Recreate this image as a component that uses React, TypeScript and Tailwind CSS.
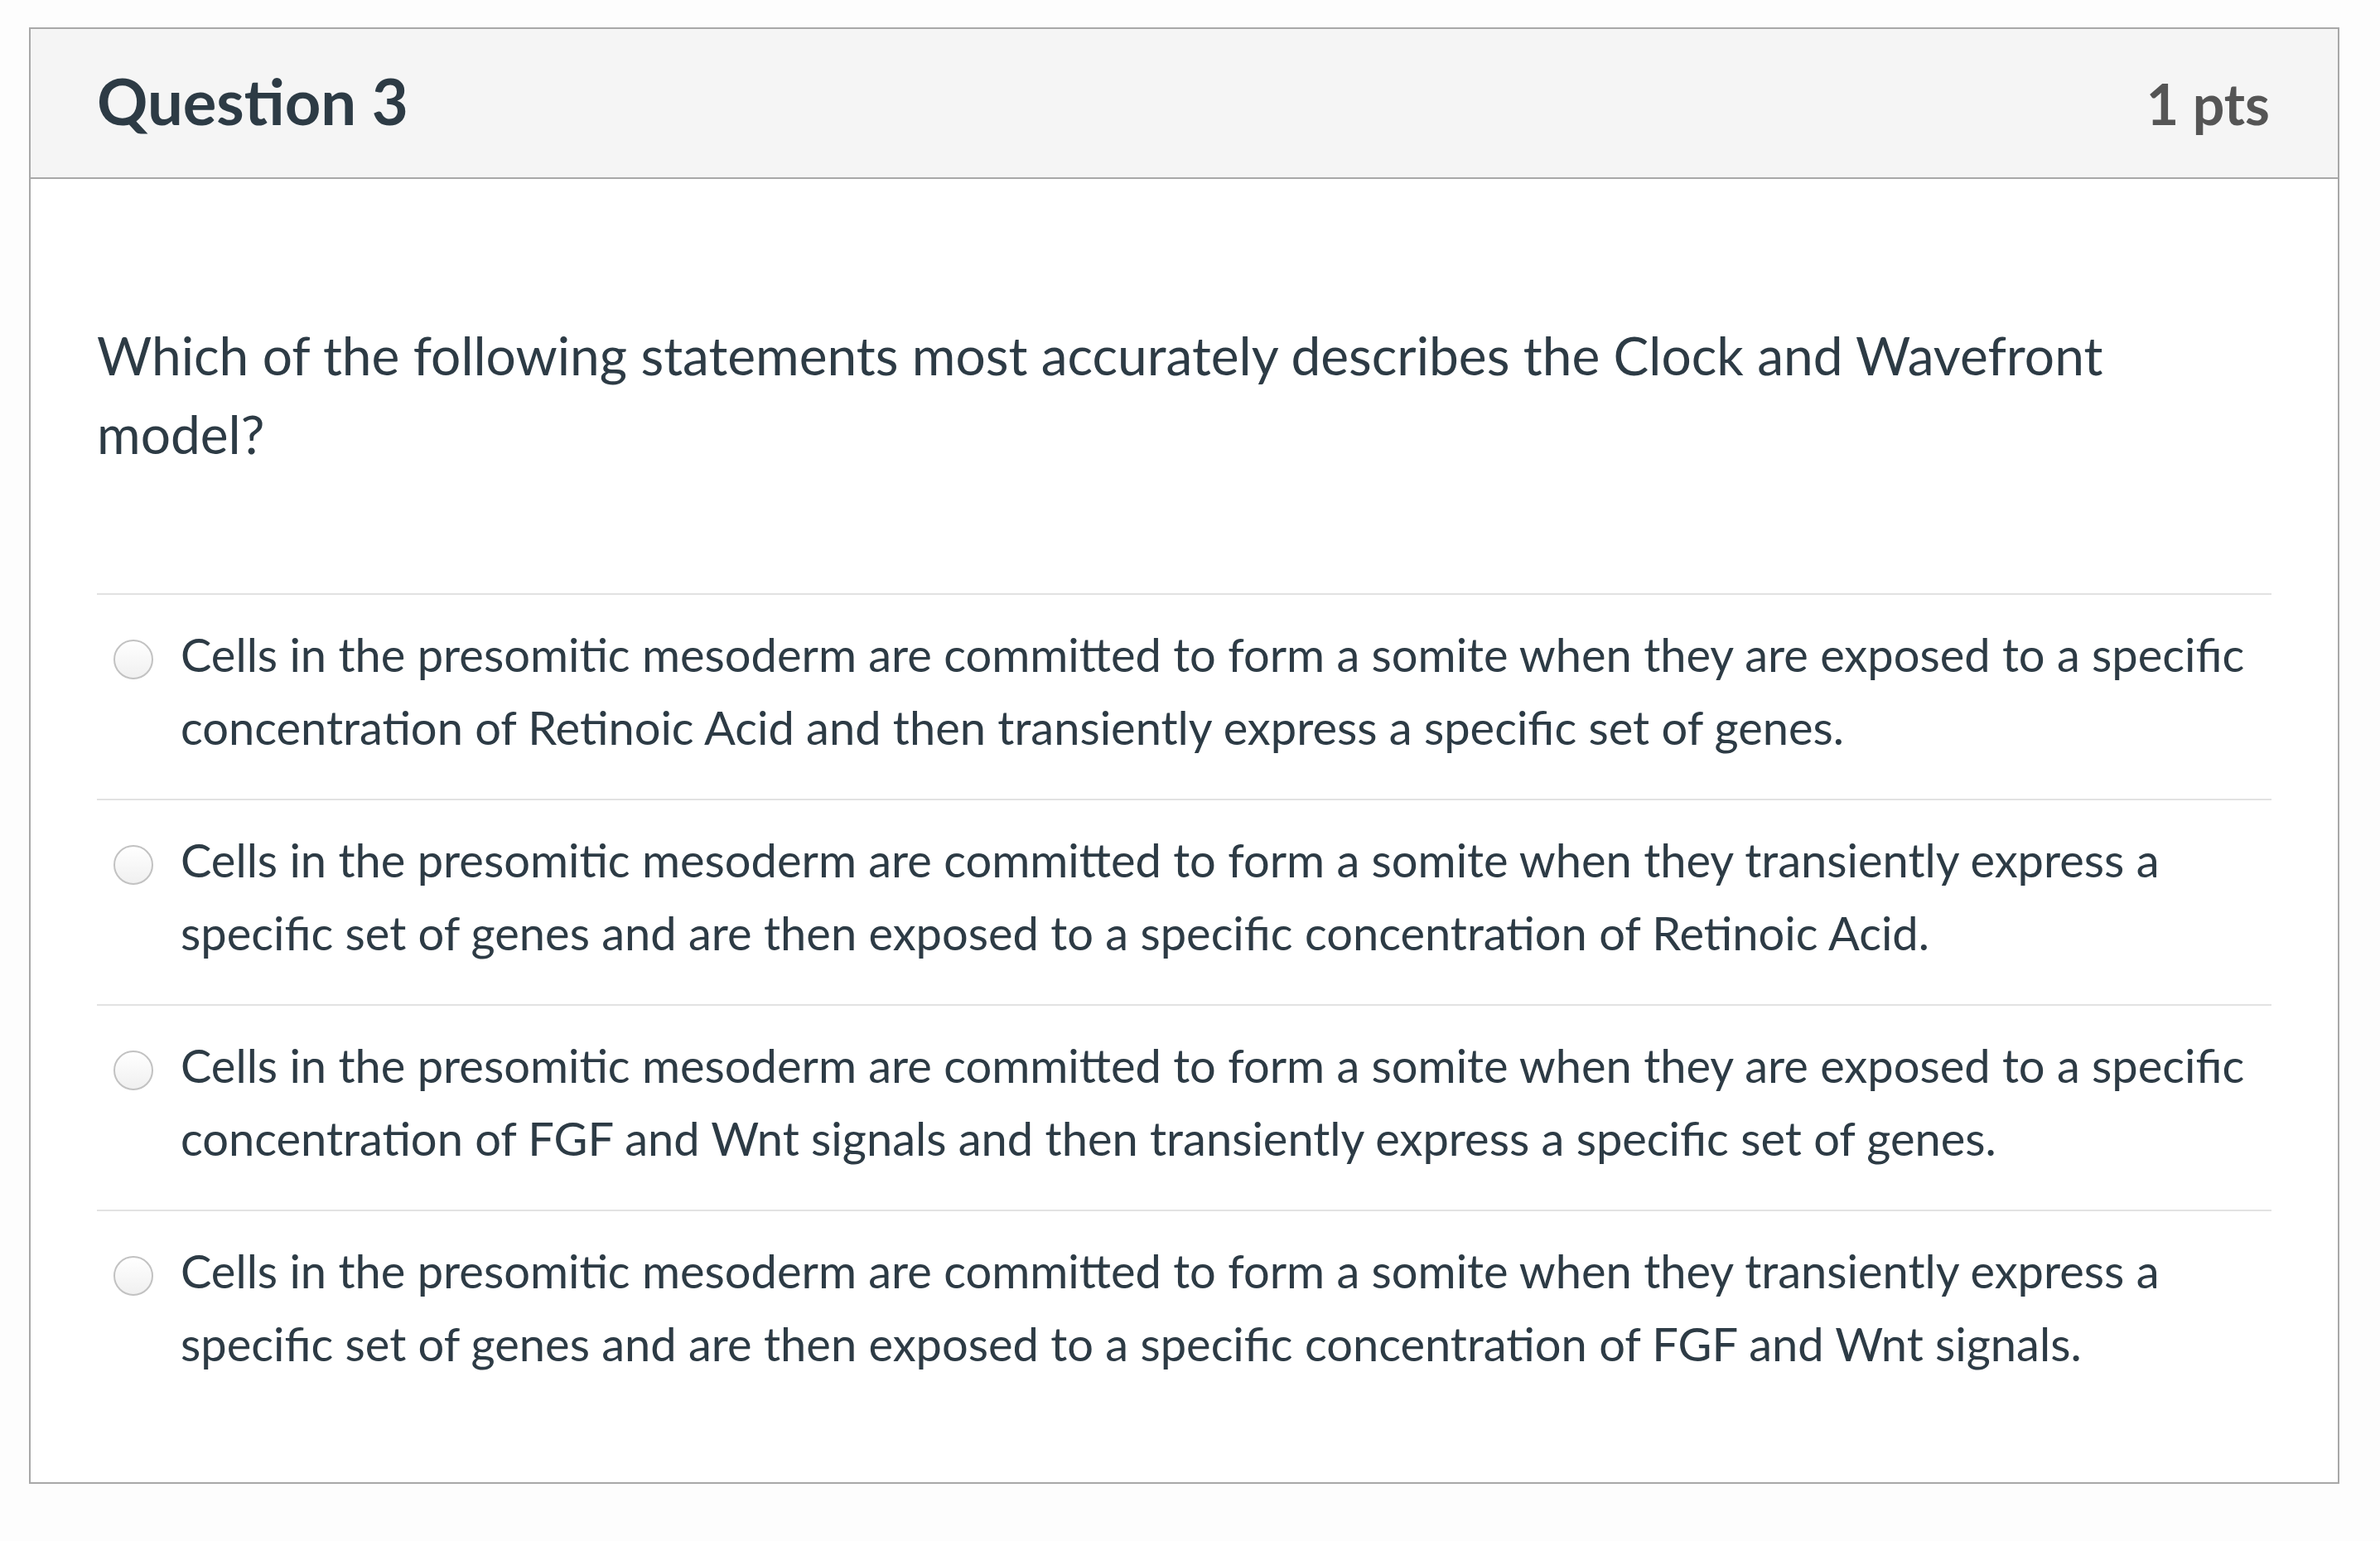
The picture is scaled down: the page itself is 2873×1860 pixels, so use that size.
const ANSWERS = [
  'Cells in the presomitic mesoderm are committed to form a somite when they are exposed to a specific concentration of Retinoic Acid and then transiently express a specific set of genes.',
  'Cells in the presomitic mesoderm are committed to form a somite when they transiently express a specific set of genes and are then exposed to a specific concentration of Retinoic Acid.',
  'Cells in the presomitic mesoderm are committed to form a somite when they are exposed to a specific concentration of FGF and Wnt signals and then transiently express a specific set of genes.',
  'Cells in the presomitic mesoderm are committed to form a somite when they transiently express a specific set of genes and are then exposed to a specific concentration of FGF and Wnt signals.',
];

export default function App() {
  return (
    <div
      className="min-h-[1860px] w-[2873px] bg-[#fdfdfd] pt-[33px] pl-[35px] text-[#2d3b45]"
      style={{ fontFamily: 'Lato, "Open Sans", sans-serif' }}
    >
      <div className="w-[2789px] h-[1758px] border-2 border-[#a8a8a8] bg-white flex flex-col">
        {/* header */}
        <div className="h-[181px] shrink-0 bg-[#f5f5f5] border-b-2 border-[#a8a8a8] flex items-baseline justify-between px-[80px] pt-[49px]">
          <h2 className="text-[76px] font-bold leading-[76px]">Question 3</h2>
          <span className="text-[68px] font-bold leading-[76px] text-[#555555] pr-[2px]">1 pts</span>
        </div>

        {/* body */}
        <div className="px-[80px] pt-[165px]">
          <p className="text-[64px] leading-[95px] max-w-[2500px]">
            Which of the following statements most accurately describes the Clock and Wavefront model?
          </p>

          <div className="mt-[145px]">
            {ANSWERS.map((answer, i) => (
              <div key={i} className="flex items-start border-t-2 border-[#e2e2e2] pt-[28px] pb-[42px]">
                <span className="mt-[26px] ml-[20px] mr-[33px] w-[48px] h-[48px] shrink-0 rounded-full border-2 border-[#c2c2c2] bg-gradient-to-b from-[#ffffff] to-[#f0f0f0]" />
                <span className="text-[56px] leading-[88px]">{answer}</span>
              </div>
            ))}
          </div>
        </div>
      </div>
    </div>
  );
}
